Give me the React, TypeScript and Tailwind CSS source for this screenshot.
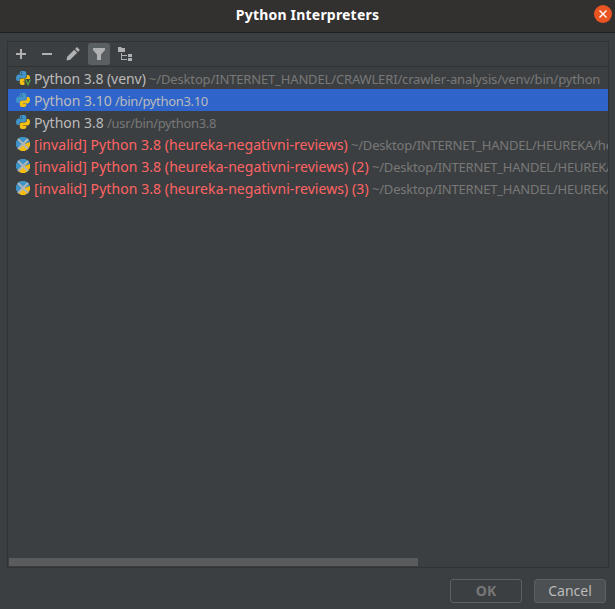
import clsx from 'clsx';

type Interpreter = {
  name: string;
  path: string;
  kind: 'venv' | 'system' | 'invalid';
  selected?: boolean;
  nameClass: string;
  pathClass: string;
};

const interpreters: Interpreter[] = [
  {
    name: 'Python 3.8 (venv)',
    path: '~/Desktop/INTERNET_HANDEL/CRAWLERI/crawler-analysis/venv/bin/python',
    kind: 'venv',
    nameClass: 'w-[115px] tracking-[-0.05px]',
    pathClass: 'tracking-[-0.15px]',
  },
  {
    name: 'Python 3.10',
    path: '/bin/python3.10',
    kind: 'system',
    selected: true,
    nameClass: 'w-[81px]',
    pathClass: 'tracking-[-0.33px]',
  },
  {
    name: 'Python 3.8',
    path: '/usr/bin/python3.8',
    kind: 'system',
    nameClass: 'w-[73px]',
    pathClass: 'tracking-[-0.32px]',
  },
  ...['', ' (2)', ' (3)'].map((suffix): Interpreter => ({
    name: `[invalid] Python 3.8 (heureka-negativni-reviews)${suffix}`,
    path: '~/Desktop/INTERNET_HANDEL/HEUREKA/he',
    kind: 'invalid',
    nameClass: suffix ? 'w-[338px] tracking-[0.07px]' : 'w-[317px] tracking-[0.06px]',
    pathClass: 'tracking-[-0.2px]',
  })),
];

const PythonIcon = ({ kind }: { kind: Interpreter['kind'] }) => (
  <svg width="16" height="16" viewBox="0 0 16 16" className="shrink-0">
    {kind === 'invalid' ? (
      <>
        <path d="M2.5 12 1 10V6l2-3.5L6 1h4l3.5 2L15 6 8 8.5Z" fill="#3e94c8" />
        <path d="M15 6v4l-2 3-3 2H6l-3.5-2.5L8 8.5Z" fill="#f3bd16" />
        <path d="m3 3 10 10m0-10L3 13" stroke="#afb5b9" strokeWidth="2" />
      </>
    ) : (
      <>
        <path
          d="M4.7 2.8Q4.7 1 7 1h2q2.3 0 2.3 2v3q0 2-2 2H6.3Q4.5 8 4.5 10v1H3q-2 0-2-3t2-3.5h5V4H4.7Z"
          fill="#4094c9"
        />
        <path
          d="M11.3 13.2q0 1.8-2.3 1.8H7q-2.2 0-2.2-2v-3q0-1.5 2-1.5h3q2 0 2-2V5H13q2 0 2 3t-2 3.5H8v.5h3.3Z"
          fill="#f4c014"
        />
        <rect x="6" y="2.2" width="1" height="1" fill="#3c3f41" />
      </>
    )}
    {kind === 'venv' && (
      <>
        <path d="M9.5 9H16v7H9.5Z" fill="#3c3f41" />
        <path d="m10.7 9.5 2.3 5.2 2.3-5.2" stroke="#56a33e" strokeWidth="1.4" fill="none" />
      </>
    )}
  </svg>
);

const Toolbar = () => (
  <div className="flex h-[25px] shrink-0 items-center gap-1 border-b border-[#303234] pl-[2px] text-[#afb1b3]">
    <button aria-label="Add" className="grid size-[22px] place-items-center">
      <svg width="16" height="16" viewBox="0 0 16 16" fill="currentColor">
        <path d="M7 3h2v4h4v2H9v4H7V9H3V7h4Z" />
      </svg>
    </button>
    <button aria-label="Remove" className="grid size-[22px] place-items-center">
      <svg width="16" height="16" viewBox="0 0 16 16" fill="currentColor">
        <path d="M3 7h10v2H3Z" />
      </svg>
    </button>
    <button aria-label="Edit" className="grid size-[22px] place-items-center">
      <svg width="16" height="16" viewBox="0 0 16 16" fill="currentColor">
        <path d="m1.5 14.5.7-3.7 7-7 3 3-7 7ZM10.1 2.9l1.3-1.3q.6-.6 1.2 0l1.8 1.8q.6.6 0 1.2l-1.3 1.3Z" />
      </svg>
    </button>
    <button aria-label="Filter" className="grid size-[22px] place-items-center rounded-[3px] bg-[#5a6062]">
      <svg width="16" height="16" viewBox="0 0 16 16" fill="currentColor">
        <path d="M2 2h12v2l-4 4.5V14H6V8.5L2 4Z" />
      </svg>
    </button>
    <button aria-label="Show paths" className="grid size-[22px] place-items-center">
      <svg width="16" height="16" viewBox="0 0 16 16" fill="currentColor">
        <path d="M1 1h3l1 1h3v4H1ZM4 7h1v2h5v1H5v3h5v1H4ZM11 8h4v3h-4ZM11 12h4v3h-4Z" />
      </svg>
    </button>
  </div>
);

export default function App() {
  return (
    <div className="flex h-[609px] w-[615px] flex-col overflow-hidden bg-[#3c3f41] font-['Noto_Sans',sans-serif] text-[14px]">
      <header className="relative flex h-[33px] shrink-0 items-center justify-center border-b border-[#1f1f1f] bg-[#333030] pb-[3px]">
        <h1 className="text-[14px] font-bold tracking-[0.2px] whitespace-nowrap text-white">
          Python Interpreters
        </h1>
        <button aria-label="Close" className="absolute top-[5px] right-[3px] size-[18px] rounded-full bg-[#e95420]">
          <svg width="18" height="18" viewBox="0 0 18 18">
            <path d="m5.5 5.5 7 7m0-7-7 7" stroke="#fff" strokeWidth="1.4" />
          </svg>
        </button>
      </header>

      <main className="mt-2 ml-[7px] flex h-[527px] w-[602px] shrink-0 flex-col border border-[#303234]">
        <Toolbar />
        <ul className="flex-1 overflow-hidden">
          {interpreters.map((item) => (
            <li
              key={item.name}
              className={clsx(
                'flex h-[22px] items-center pl-[7px] whitespace-nowrap',
                item.selected && 'bg-[#2f65ca]',
              )}
            >
              <PythonIcon kind={item.kind} />
              <div className="mt-0.5 ml-[3px] flex items-baseline">
                <span
                  className={clsx(
                    'shrink-0',
                    item.nameClass,
                    item.kind === 'invalid' ? 'text-[#ff6464]' : 'text-[#bbbbbb]',
                  )}
                >
                  {item.name}
                </span>
                <span
                  className={clsx(
                    'text-[13px]',
                    item.pathClass,
                    item.selected ? 'text-[#bbbbbb]' : 'text-[#787878]',
                  )}
                >
                  {item.path}
                </span>
              </div>
            </li>
          ))}
        </ul>
        <div className="mb-px ml-px h-2 w-[409px] bg-[#595b5d]" />
      </main>

      <footer className="mt-[11px] flex justify-end gap-3 pr-[9px]">
        <button className="h-6 w-[72px] rounded-[3px] border border-[#5e6060] pb-px leading-5 font-bold text-[#777777]">
          OK
        </button>
        <button className="h-6 w-[72px] rounded-[3px] border border-[#5e6060] bg-[#4c5052] pb-px leading-5 text-[#bbbbbb]">
          Cancel
        </button>
      </footer>
    </div>
  );
}
